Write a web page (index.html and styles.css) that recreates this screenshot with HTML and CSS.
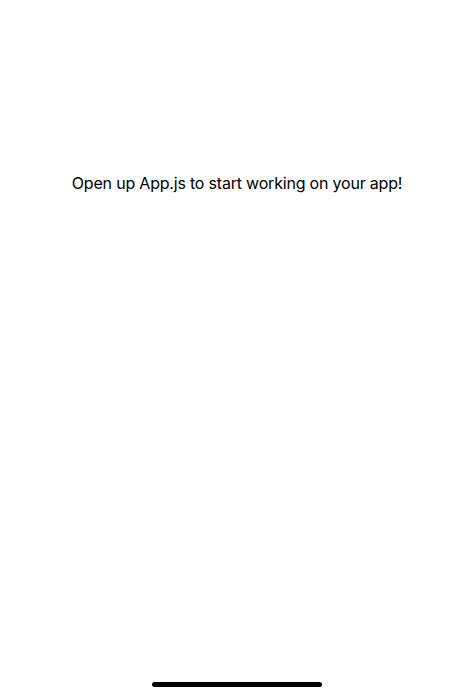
FILE: index.html
```html
<!DOCTYPE html>
<html>
<head>
<meta charset="utf-8">
<link rel="stylesheet" href="styles.css">
</head>
<body>
<div class="screen">
  <div class="content">
    <p class="message">Open up App.js to start working on your app!</p>
  </div>
  <div class="home-bar"><div class="home-indicator"></div></div>
</div>
</body>
</html>
```

FILE: styles.css
```css
html, body {
  margin: 0;
  padding: 0;
  background: #ffffff;
}
.screen {
  width: 474px;
  height: 696px;
  display: flex;
  flex-direction: column;
  background: #ffffff;
}
.content {
  flex: 1;
  display: flex;
  justify-content: center;
  padding-top: 173px;
}
.message {
  margin: 0;
  font-family: Inter, "Liberation Sans", sans-serif;
  font-size: 16px;
  line-height: 20px;
  color: #000000;
  letter-spacing: -0.2px;
}
.home-bar {
  height: 14px;
  display: flex;
  justify-content: center;
  padding-bottom: 9px;
}
.home-indicator {
  width: 170px;
  height: 5px;
  border-radius: 3px;
  background: #000000;
  align-self: flex-end;
}
```
